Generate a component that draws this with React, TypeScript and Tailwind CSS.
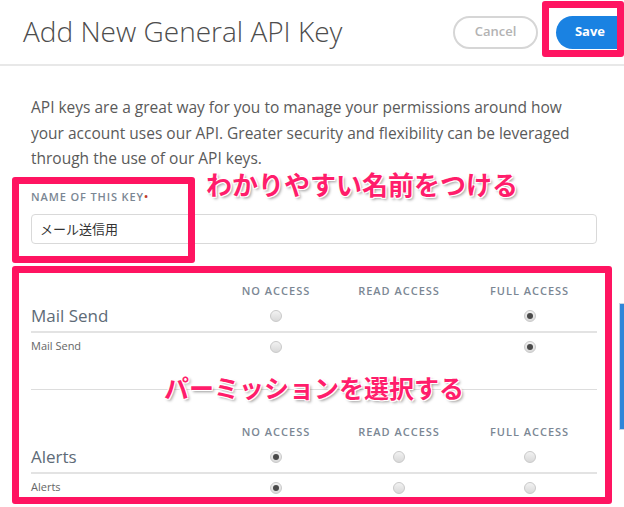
import React from 'react'

const COLS = ['NO ACCESS', 'READ ACCESS', 'FULL ACCESS']
const widths = ['w-[120px]', 'w-[126px]', 'w-[135px]']

interface PermissionProps {
  title: string
  top: (number | null)[]
  sub: (number | null)[]
}

const Radio: React.FC<{ checked?: boolean }> = ({ checked }) => (
  <span className="flex h-[12px] w-[12px] items-center justify-center rounded-full border border-[#c9c9c9] bg-gradient-to-b from-[#f2f2f2] to-[#d9d9d9]">
    {checked && <span className="h-[6px] w-[6px] rounded-full bg-[#4a4a4a]" />}
  </span>
)

const Cells: React.FC<{ values: (number | null)[] }> = ({ values }) => (
  <>
    {values.map((v, i) => (
      <div key={i} className={`${widths[i]} flex justify-center`}>
        {v !== null && <Radio checked={v === 1} />}
      </div>
    ))}
  </>
)

const Permission: React.FC<PermissionProps> = ({ title, top, sub }) => {
  return (
    <div className="flex flex-col">
      <div className="flex h-[18px] items-center text-[11px] font-semibold tracking-[0.09em] text-[#7b8794]">
        <div className="w-[185px]" />
        {COLS.map((c, i) => (
          <div key={c} className={`${widths[i]} text-center`}>
            {c}
          </div>
        ))}
      </div>
      <div className="flex h-[33px] items-center border-b-2 border-[#e3e3e3]">
        <div className="w-[185px] text-[17px] text-[#5e6b77]">{title}</div>
        <Cells values={top} />
      </div>
      <div className="flex h-[27px] items-center">
        <div className="w-[185px] text-[11px] text-[#666]">{title}</div>
        <Cells values={sub} />
      </div>
    </div>
  )
}

const pinkText =
  "absolute font-['Noto_Sans_CJK_JP',sans-serif] font-bold leading-none text-[#ff1d6b] [text-shadow:1px_1px_0_#fff,-1px_-1px_0_#fff,1px_-1px_0_#fff,-1px_1px_0_#fff,2px_2px_3px_rgba(0,0,0,0.4)]"

export default function App() {
  return (
    <div className="relative h-[507px] w-[624px] overflow-hidden bg-white font-['Open_Sans',sans-serif]">
      <header className="flex h-[66px] items-center justify-between border-b-2 border-[#e8e8e8] pl-[23px]">
        <h1 className="pb-[2px] text-[28px] font-light text-[#4d4d4d]">Add New General API Key</h1>
        <div className="flex items-center gap-[18px]">
          <button className="h-[33px] w-[85px] rounded-full border-2 border-[#d6d6d6] text-[13px] font-semibold text-[#b3b3b3]">
            Cancel
          </button>
          <button className="h-[33px] w-[68px] rounded-l-full bg-[#1a82e2] text-[13px] font-bold text-white">
            Save
          </button>
        </div>
      </header>

      <main className="pl-[31px] pr-[27px] pt-[29px]">
        <p className="pr-[8px] text-[15.5px] leading-[25.5px] text-[#5a5a5a]">
          API keys are a great way for you to manage your permissions around how your account uses our API. Greater
          security and flexibility can be leveraged through the use of our API keys.
        </p>

        <label className="mt-[17px] block text-[11px] font-semibold tracking-[0.08em] text-[#7b8794]">
          NAME OF THIS KEY<span className="text-[#c0392b]">•</span>
        </label>
        <div className="mt-[9px] flex h-[30px] items-center rounded-[4px] border border-[#d9d9d9] px-[8px] text-[13px] text-[#333] font-['Noto_Sans_CJK_JP',sans-serif]">
          メール送信用
        </div>

        <div className="mt-[38px]">
          <Permission title="Mail Send" top={[0, null, 1]} sub={[0, null, 1]} />
          <div className="mt-[29px] border-t border-[#dddddd]" />
          <div className="mt-[33px]">
            <Permission title="Alerts" top={[1, 0, 0]} sub={[1, 0, 0]} />
          </div>
        </div>
      </main>

      {/* annotation overlays */}
      <div className="absolute left-[542px] top-[1px] h-[56px] w-[82px] rounded-[3px] border-[7px] border-[#ff1461]" />
      <div className="absolute left-[12px] top-[177px] h-[86px] w-[183px] rounded-[3px] border-[7px] border-[#ff1461]" />
      <div className="absolute left-[12px] top-[266px] h-[238px] w-[600px] rounded-[3px] border-[7px] border-[#ff1461]" />
      <div className={`${pinkText} left-[206px] top-[171px] text-[26px]`}>わかりやすい名前をつける</div>
      <div className={`${pinkText} left-[164px] top-[375px] text-[25px]`}>パーミッションを選択する</div>
      <div className="absolute left-[619px] top-[303px] h-[127px] w-[6px] border border-[#c9d6e3] bg-[#2f86d9]" />
    </div>
  )
}
